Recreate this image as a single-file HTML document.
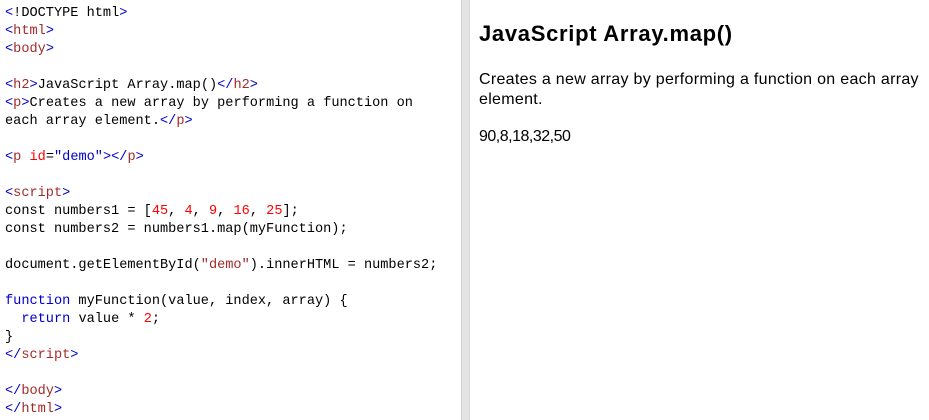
<!DOCTYPE html>
<html><head><style>
body{margin:0;width:929px;height:420px;overflow:hidden;background:#fff;position:relative}
#code{position:absolute;left:5px;top:5px;font:13.6px/18px "Liberation Mono",monospace;white-space:pre;color:#000}
.t{color:#a52a2a}.b{color:#0000cd}.a{color:#f00}.n{color:#f00}.k{color:#0000cd}
#div{position:absolute;left:461px;top:0;width:9px;height:420px;background:#e4e4e4;border-left:1px solid #d0d0d0;border-right:1px solid #d8d8d8;box-sizing:border-box}
#out{position:absolute;left:479px;top:0;width:445px;font-family:"Liberation Sans",sans-serif;color:#000}
h2{font-size:22px;margin:21px 0 0;line-height:26px;letter-spacing:0.7px}
p{font-size:16px;line-height:20px;margin:0}
</style></head><body>
<div id="code"><span class="b">&lt;</span>!DOCTYPE html<span class="b">&gt;</span>
<span class="b">&lt;</span><span class="t">html</span><span class="b">&gt;</span>
<span class="b">&lt;</span><span class="t">body</span><span class="b">&gt;</span>

<span class="b">&lt;</span><span class="t">h2</span><span class="b">&gt;</span>JavaScript Array.map()<span class="b">&lt;/</span><span class="t">h2</span><span class="b">&gt;</span>
<span class="b">&lt;</span><span class="t">p</span><span class="b">&gt;</span>Creates a new array by performing a function on
each array element.<span class="b">&lt;/</span><span class="t">p</span><span class="b">&gt;</span>

<span class="b">&lt;</span><span class="t">p</span> <span class="a">id</span>=<span class="b">"demo"</span><span class="b">&gt;&lt;/</span><span class="t">p</span><span class="b">&gt;</span>

<span class="b">&lt;</span><span class="t">script</span><span class="b">&gt;</span>
const numbers1 = [<span class="n">45</span>, <span class="n">4</span>, <span class="n">9</span>, <span class="n">16</span>, <span class="n">25</span>];
const numbers2 = numbers1.map(myFunction);

document.getElementById(<span class="t">"demo"</span>).innerHTML = numbers2;

<span class="k">function</span> myFunction(value, index, array) {
  <span class="k">return</span> value * <span class="n">2</span>;
}
<span class="b">&lt;/</span><span class="t">script</span><span class="b">&gt;</span>

<span class="b">&lt;/</span><span class="t">body</span><span class="b">&gt;</span>
<span class="b">&lt;/</span><span class="t">html</span><span class="b">&gt;</span></div>
<div id="div"></div>
<div id="out">
<h2>JavaScript Array.map()</h2>
<p style="margin-top:23px;letter-spacing:0.3px">Creates a new array by performing a function on each array element.</p>
<p style="margin-top:17px;letter-spacing:-0.5px">90,8,18,32,50</p>
</div>
</body></html>
